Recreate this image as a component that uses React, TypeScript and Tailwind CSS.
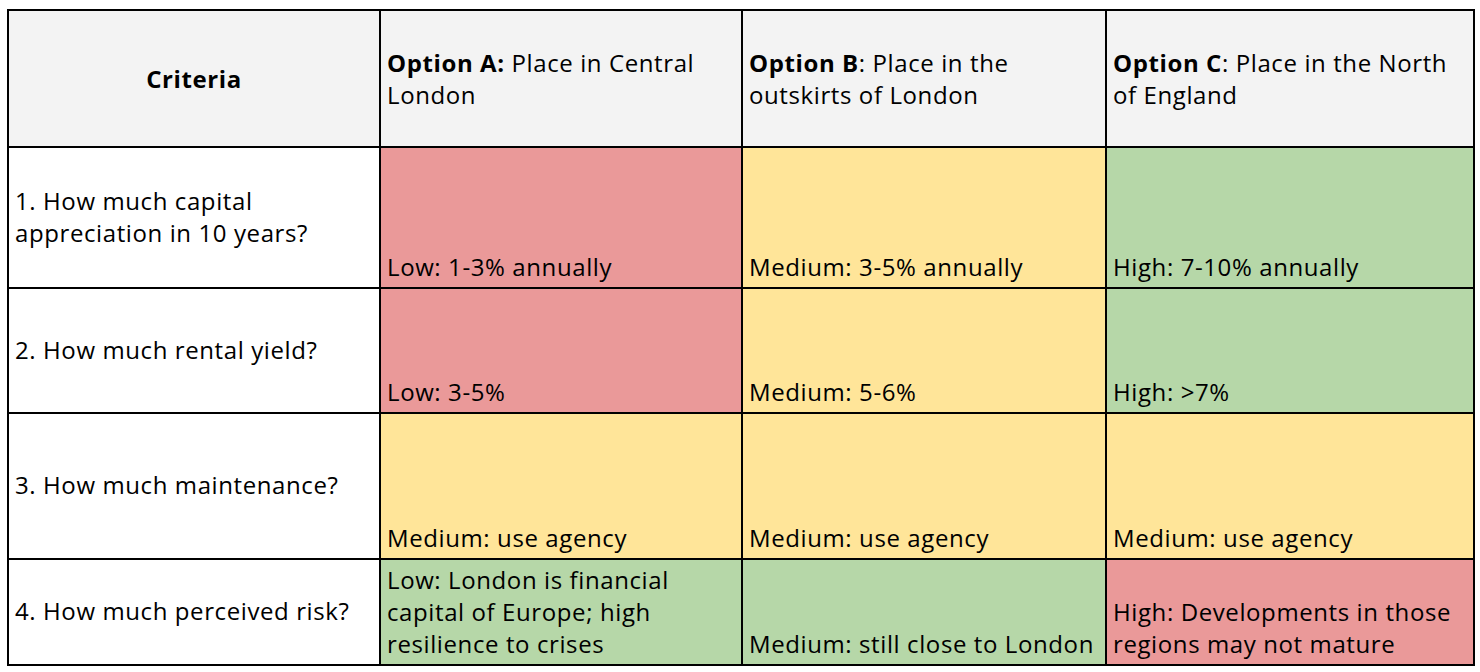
const RED = "bg-[#ea9999]";
const YEL = "bg-[#ffe599]";
const GRN = "bg-[#b6d7a8]";

type Cell = { bg: string; text: React.ReactNode };

const rows: { h: string; label: React.ReactNode; cells: Cell[] }[] = [
  {
    h: "h-[141px]",
    label: (<>1. How much capital<br />appreciation in 10 years?</>),
    cells: [
      { bg: RED, text: "Low: 1-3% annually" },
      { bg: YEL, text: "Medium: 3-5% annually" },
      { bg: GRN, text: "High: 7-10% annually" },
    ],
  },
  {
    h: "h-[125px]",
    label: "2. How much rental yield?",
    cells: [
      { bg: RED, text: "Low: 3-5%" },
      { bg: YEL, text: "Medium: 5-6%" },
      { bg: GRN, text: "High: >7%" },
    ],
  },
  {
    h: "h-[146px]",
    label: "3. How much maintenance?",
    cells: [
      { bg: YEL, text: "Medium: use agency" },
      { bg: YEL, text: "Medium: use agency" },
      { bg: YEL, text: "Medium: use agency" },
    ],
  },
  {
    h: "h-[106px]",
    label: "4. How much perceived risk?",
    cells: [
      { bg: GRN, text: (<>Low: London is financial<br />capital of Europe; high<br />resilience to crises</>) },
      { bg: GRN, text: "Medium: still close to London" },
      { bg: RED, text: (<>High: Developments in those<br />regions may not mature</>) },
    ],
  },
];

export default function App() {
  return (
    <div className="w-[1480px] h-[672px] bg-white pt-[9px] pl-[7px] text-black" style={{ fontFamily: "'Open Sans', Lato, sans-serif" }}>
      <table className="table-fixed border-collapse text-[24px] leading-[32px] tracking-[0.6px]">
        <colgroup>
          <col className="w-[372px]" />
          <col className="w-[362px]" />
          <col className="w-[364px]" />
          <col className="w-[368px]" />
        </colgroup>
        <thead>
          <tr className="h-[137px] bg-[#f3f3f3]">
            <th className="border-2 border-black text-center align-middle font-bold">Criteria</th>
            <th className="border-2 border-black text-left align-middle font-normal px-[6px]">
              <span className="font-bold">Option A:</span> Place in Central<br />London
            </th>
            <th className="border-2 border-black text-left align-middle font-normal px-[6px]">
              <span className="font-bold">Option B</span>: Place in the<br />outskirts of London
            </th>
            <th className="border-2 border-black text-left align-middle font-normal px-[6px]">
              <span className="font-bold">Option C</span>: Place in the North<br />of England
            </th>
          </tr>
        </thead>
        <tbody>
          {rows.map((r, i) => (
            <tr key={i} className={r.h}>
              <td className="border-2 border-black align-middle px-[6px] pb-[2px] whitespace-nowrap">{r.label}</td>
              {r.cells.map((c, j) => (
                <td key={j} className={`border-2 border-black align-bottom px-[6px] pb-[4px] whitespace-nowrap ${c.bg}`}>{c.text}</td>
              ))}
            </tr>
          ))}
        </tbody>
      </table>
    </div>
  );
}
